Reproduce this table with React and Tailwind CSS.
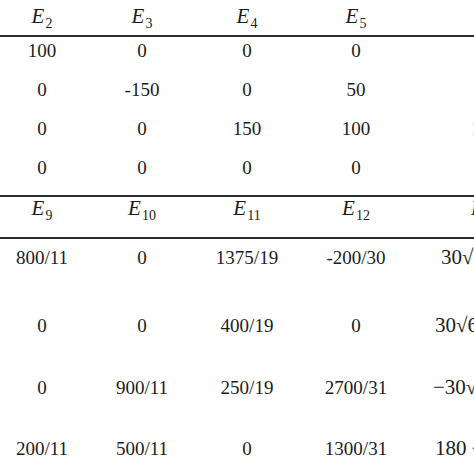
import React from 'react';

const cols = 'grid grid-cols-[84px_116px_94px_124px_1fr] w-[474px] items-center';

const topHead = [
  ['E', '2'],
  ['E', '3'],
  ['E', '4'],
  ['E', '5'],
];

const topRows = [
  { cells: ['100', '0', '0', '0'], last: '', pad: 'pl-[54px]' },
  { cells: ['0', '-150', '0', '50'], last: '', pad: 'pl-[54px]' },
  { cells: ['0', '0', '150', '100'], last: '150', pad: 'pl-[54px]' },
  { cells: ['0', '0', '0', '0'], last: '', pad: 'pl-[54px]' },
];

const midHead = [
  ['E', '9'],
  ['E', '10'],
  ['E', '11'],
  ['E', '12'],
  ['E', '13'],
];

const bottomRows = [
  { cells: ['800/11', '0', '1375/19', '-200/30'], last: '30√2/11', pad: 'pl-[23px]', gap: 'mt-[8px]' },
  { cells: ['0', '0', '400/19', '0'], last: '30√6/19', pad: 'pl-[17px]', gap: 'mt-[48px]' },
  { cells: ['0', '900/11', '250/19', '2700/31'], last: '−30√6/11', pad: 'pl-[15px]', gap: 'mt-[42px]' },
  { cells: ['200/11', '500/11', '0', '1300/31'], last: '180 − 30√6', pad: 'pl-[17px]', gap: 'mt-[41px]' },
];

const Sym = ({ base, sub }) => (
  <span className="whitespace-nowrap">
    <span className="italic text-[21px]">{base}</span>
    <span className="text-[14px] relative top-[5px] ml-[1px]">{sub}</span>
  </span>
);

const Rule = () => <div className="h-[2px] w-[474px] bg-[#2b2b2b]" />;

export default function App() {
  return (
    <div
      className="w-[474px] h-[474px] overflow-hidden bg-white text-[#1c1c1c] flex flex-col"
      style={{ fontFamily: '"Liberation Serif", "Times New Roman", serif' }}
    >
      {/* header 1 */}
      <div className={`${cols} h-[32px] mb-[3px]`}>
        {topHead.map(([b, s], i) => (
          <div key={i} className="text-center leading-none">
            <Sym base={b} sub={s} />
          </div>
        ))}
        <div />
      </div>
      <Rule />

      {/* top section */}
      <div className="flex flex-col gap-[19px] mt-[3px] mb-[18px]">
        {topRows.map((r, i) => (
          <div key={i} className={`${cols} h-[20px] text-[19px] leading-none`}>
            {r.cells.map((c, j) => (
              <div key={j} className="text-center whitespace-nowrap">{c}</div>
            ))}
            <div className={`${r.pad} whitespace-nowrap`}>{r.last}</div>
          </div>
        ))}
      </div>
      <Rule />

      {/* header 2 */}
      <div className={`${cols} h-[40px] pb-[18px]`}>
        {midHead.slice(0, 4).map(([b, s], i) => (
          <div key={i} className="text-center leading-none">
            <Sym base={b} sub={s} />
          </div>
        ))}
        <div className="pl-[53px] leading-none">
          <Sym base={midHead[4][0]} sub={midHead[4][1]} />
        </div>
      </div>
      <Rule />

      {/* bottom section */}
      <div className="flex flex-col">
        {bottomRows.map((r, i) => (
          <div key={i} className={`${cols} ${r.gap} h-[20px] text-[19px] leading-none`}>
            {r.cells.map((c, j) => (
              <div key={j} className="text-center whitespace-nowrap">{c}</div>
            ))}
            <div className={`${r.pad} whitespace-nowrap text-[21px]`}>{r.last}</div>
          </div>
        ))}
      </div>
    </div>
  );
}
